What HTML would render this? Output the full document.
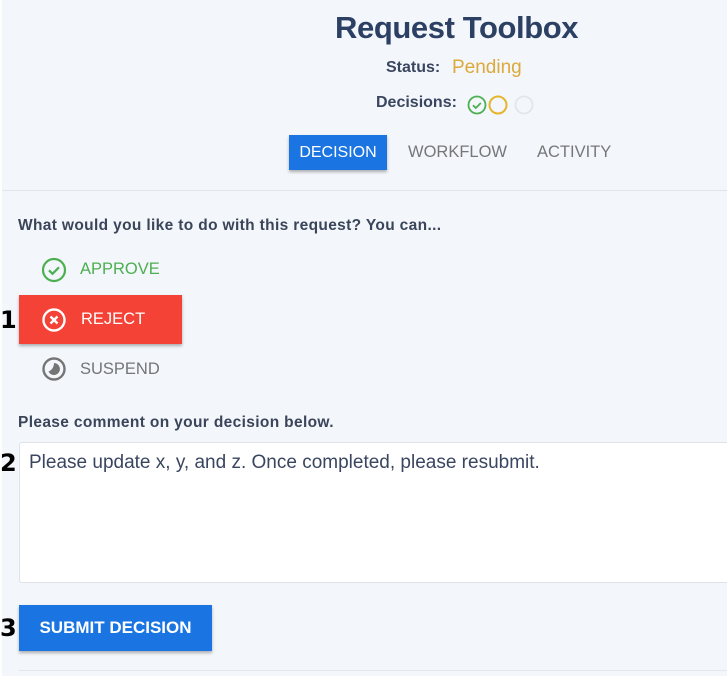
<!DOCTYPE html>
<html><head><meta charset="utf-8"><style>
*{margin:0;padding:0;box-sizing:border-box}
body{width:727px;height:683px;background:#fff;font-family:"Liberation Sans",sans-serif;position:relative;overflow:hidden}
.bg{position:absolute;left:2px;top:0;width:725px;height:676px;background:#f3f6fb}
.a{position:absolute;white-space:nowrap}
.num{font-weight:bold;font-size:24px;color:#000;font-family:"DejaVu Sans",sans-serif}
</style></head><body>
<div class="bg"></div>
<div class="a" style="left:335px;top:10px;font-size:31px;font-weight:bold;color:#2c4063;letter-spacing:-0.4px">Request Toolbox</div>
<div class="a" style="left:386px;top:59px;font-size:16px;font-weight:bold;color:#3a4660">Status:</div>
<div class="a" style="left:452px;top:57px;font-size:19px;color:#dcaa3a">Pending</div>
<div class="a" style="left:376px;top:94px;font-size:16px;font-weight:bold;color:#3a4660">Decisions:</div>
<svg class="a" style="left:466px;top:94px" width="70" height="22">
<circle cx="11" cy="11" r="8.5" fill="none" stroke="#4caf50" stroke-width="1.8"/>
<path d="M7 11.2l2.8 2.8 5-5" fill="none" stroke="#4caf50" stroke-width="1.8"/>
<circle cx="32" cy="11" r="8.5" fill="none" stroke="#e5b52c" stroke-width="2"/>
<circle cx="58" cy="11" r="8.5" fill="none" stroke="#e2e5ea" stroke-width="1.8"/>
</svg>
<div class="a" style="left:289px;top:135px;width:98px;height:35px;background:#1a74e2;box-shadow:0 2px 3px rgba(0,0,0,.3);color:#fff;font-size:16px;line-height:35px;text-align:center">DECISION</div>
<div class="a" style="left:408px;top:143px;font-size:16.5px;color:#777">WORKFLOW</div>
<div class="a" style="left:537px;top:143px;font-size:16.5px;color:#777">ACTIVITY</div>
<div class="a" style="left:2px;top:190px;width:725px;height:1px;background:#e1e4ea"></div>
<div class="a" style="left:18px;top:217px;font-size:15.5px;font-weight:bold;color:#3b4559;letter-spacing:0.35px">What would you like to do with this request? You can...</div>
<svg class="a" style="left:41px;top:257px" width="26" height="26"><circle cx="13" cy="13" r="11" fill="none" stroke="#4caf50" stroke-width="2.2"/><path d="M8 13.3l3.5 3.5 6.5-6.5" fill="none" stroke="#4caf50" stroke-width="2.2"/></svg>
<div class="a" style="left:80px;top:260px;font-size:16.5px;color:#4caf50">APPROVE</div>
<div class="a" style="left:19px;top:295px;width:163px;height:49px;background:#f44336;box-shadow:0 2px 3px rgba(0,0,0,.3)"></div>
<svg class="a" style="left:41px;top:307px" width="26" height="26"><circle cx="13" cy="13" r="10.5" fill="none" stroke="#fff" stroke-width="2.4"/><path d="M9.5 9.5l7 7M16.5 9.5l-7 7" stroke="#fff" stroke-width="2.4"/></svg>
<div class="a" style="left:81px;top:310px;font-size:16.5px;color:#fff">REJECT</div>
<svg class="a" style="left:41px;top:356px" width="26" height="26"><circle cx="13" cy="13" r="10.5" fill="none" stroke="#757575" stroke-width="2.4"/><path d="M13 7A6 6 0 1 1 7.5 15.5C11 14 13 11 13 7Z" fill="#757575"/></svg>
<div class="a" style="left:80px;top:360px;font-size:16.5px;color:#757575">SUSPEND</div>
<div class="a" style="left:18px;top:414px;font-size:15.5px;font-weight:bold;color:#3b4559;letter-spacing:0.35px">Please comment on your decision below.</div>
<div class="a" style="left:19px;top:442px;width:720px;height:141px;background:#fff;border:1px solid #dfe2e7;border-radius:3px"></div>
<div class="a" style="left:29px;top:452px;font-size:19px;color:#3a4660">Please update x, y, and z. Once completed, please resubmit.</div>
<div class="a" style="left:19px;top:605px;width:193px;height:46px;background:#1a74e2;box-shadow:0 2px 3px rgba(0,0,0,.3);color:#fff;font-size:17px;font-weight:bold;line-height:46px;text-align:center">SUBMIT DECISION</div>
<div class="a" style="left:19px;top:670px;width:708px;height:1px;background:#e4e7ec"></div>
<div class="a num" style="left:0;top:306px">1</div>
<div class="a num" style="left:0;top:449px">2</div>
<div class="a num" style="left:0;top:614px">3</div>
</body></html>
